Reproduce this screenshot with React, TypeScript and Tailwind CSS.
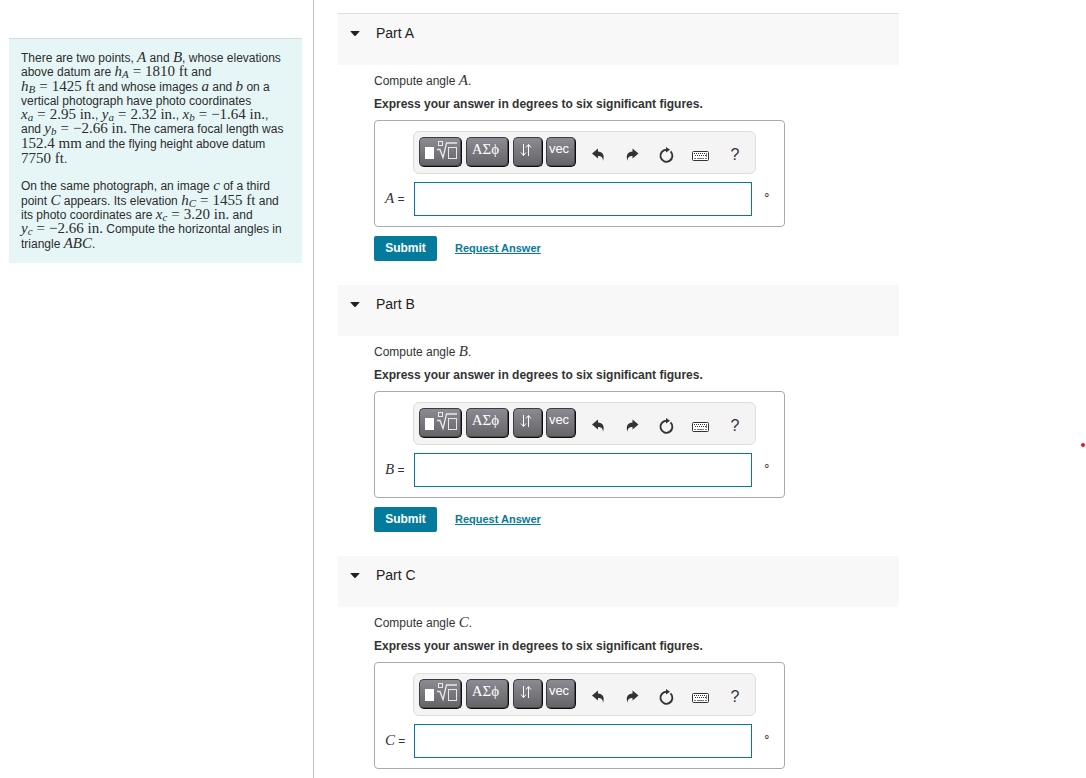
import React from "react";

const parts = [
    { letter: "A", first: true, actions: true },
    { letter: "B", first: false, actions: true },
    { letter: "C", first: false, actions: false },
];

export default function App() {
    return (
        <div className="relative flex min-h-screen bg-white font-['Liberation_Sans',Arial,sans-serif] text-xs text-[#333333]">
            <aside className="w-[314px] shrink-0 border-r border-[#bfc0c8] pt-[38px] pr-[11px] pl-[9px]">
                <Problem />
            </aside>
            <main className="min-w-0 flex-1 pt-[13px] pl-6">
                <div className="max-w-[561px]">
                    {parts.map((part) => (
                        <Part key={part.letter} {...part} />
                    ))}
                </div>
            </main>
            <span className="absolute top-[443px] right-px size-1 rounded-full bg-[#f01418]" />
        </div>
    );
}

function Problem() {
    return (
        <div className="border-t border-[#d5dcdd] bg-[#e6f6f7] px-3 pt-[11px] pb-3 leading-[14px] text-[#2c2c2c]">
            <p>
                There are two points, <Var>A</Var> and <Var>B</Var>, whose elevations
                above datum are <Equation name="h" sub="A" value="1810 ft" /> and{" "}
                <br />
                <Equation name="h" sub="B" value="1425 ft" /> and whose images{" "}
                <Var>a</Var> and <Var>b</Var> on a vertical photograph have photo
                coordinates <br />
                <Equation name="x" sub="a" value="2.95 in." />,{" "}
                <Equation name="y" sub="a" value="2.32 in." />,{" "}
                <Equation name="x" sub="b" value="−1.64 in." />, <br />
                and <Equation name="y" sub="b" value="−2.66 in." /> The camera focal
                length was <Num>152.4 mm</Num> and the flying height above datum{" "}
                <Num>7750 ft</Num>.
            </p>
            <p className="mt-3">
                On the same photograph, an image <Var>c</Var> of a third point{" "}
                <Var>C</Var> appears. Its elevation{" "}
                <Equation name="h" sub="C" value="1455 ft" /> and its photo coordinates
                are <Equation name="x" sub="c" value="3.20 in." /> and{" "}
                <Equation name="y" sub="c" value="−2.66 in." /> Compute the horizontal
                angles in triangle <Var>ABC</Var>.
            </p>
        </div>
    );
}

const Var = ({ children }: { children: React.ReactNode }) => (
    <i className="font-['Liberation_Serif',serif] text-[15px] leading-[14px]">
        {children}
    </i>
);

const Num = ({ children }: { children: React.ReactNode }) => (
    <span className="font-['Liberation_Serif',serif] text-[15px] leading-[14px] whitespace-nowrap">
        {children}
    </span>
);

const Equation = ({
    name,
    sub,
    value,
}: {
    name: string;
    sub: string;
    value: string;
}) => (
    <span className="font-['Liberation_Serif',serif] text-[15px] leading-[12px] whitespace-nowrap">
        <i>{name}</i>
        <sub className="bottom-[-2px] text-[11px] leading-none italic">{sub}</sub>
        <span className="mx-1">=</span>
        {value}
    </span>
);

function Part({
    letter,
    first,
    actions,
}: {
    letter: string;
    first: boolean;
    actions: boolean;
}) {
    return (
        <section className={actions ? "mb-6" : ""}>
            <header
                className={
                    first
                        ? "border-t border-[#dddddd] bg-[#f8f8f8]"
                        : "bg-[#f8f8f8]"
                }
            >
                <button
                    type="button"
                    className="flex h-[51px] w-full items-start gap-4 pt-[9px] pl-3 text-left text-sm text-[#222222]"
                >
                    <svg viewBox="0 0 10 5" className="mt-2 h-[5px] w-[10px]">
                        <path d="M1 0h8q1 0 .3.800L5.600 4.700q-.6.500-1.200 0L.7.800Q0 0 1 0z" fill="#222222" />
                    </svg>
                    Part {letter}
                </button>
            </header>

            <div className="pl-9">
                <p className="pt-2 leading-4">
                    Compute angle <Var>{letter}</Var>.
                </p>
                <p className="mt-[7px] leading-4 font-bold">
                    Express your answer in degrees to six significant figures.
                </p>

                <div className="mt-2 h-[107px] max-w-[411px] rounded-sm border border-[#aaaaaa] pt-[10px] pl-[38px]">
                    <Toolbar />
                    <div className="mt-2 -ml-7 flex items-center">
                        <label htmlFor={`answer-${letter}`} className="w-[29px] whitespace-nowrap">
                            <Var>{letter}</Var> =
                        </label>
                        <input
                            id={`answer-${letter}`}
                            type="text"
                            className="h-[34px] w-[338px] border border-[#047a9c] bg-white px-2 text-sm outline-none"
                        />
                        <span className="mb-2 ml-[11px] text-xs leading-4 text-[#444444]">
                            ∘
                        </span>
                    </div>
                </div>

                {actions && (
                    <div className="mt-[9px] flex items-center gap-[18px]">
                        <button
                            type="button"
                            className="h-[25px] w-[63px] rounded-xs bg-[#047a9c] pb-[2px] text-xs font-bold text-white"
                        >
                            Submit
                        </button>
                        <a
                            href="#"
                            className="text-[11px] font-bold text-[#047a9c] underline"
                        >
                            Request Answer
                        </a>
                    </div>
                )}
            </div>
        </section>
    );
}

const keyClass =
    "flex h-[30px] justify-center rounded-[5px] border border-[#0c0c0c] border-t-[#3c3c40] border-l-[#3c3c40] bg-linear-to-b from-[#8c8a93] to-[#646467] text-white shadow-[inset_-1px_-1px_0_#4a4a4e]";

function Toolbar() {
    return (
        <div className="flex h-[43px] w-[343px] items-center rounded-md border border-[#dddddd] bg-[#f4f4f4] pb-[2px] pl-[5px]">
            <button type="button" aria-label="Templates" className={`${keyClass} mr-1 w-[43px]`}>
                <TemplateIcon />
            </button>
            <button
                type="button"
                className={`${keyClass} mr-1 w-[43px] pt-[2px] pr-1 font-['Liberation_Serif',serif] text-[15px] leading-[18px]`}
            >
                ΑΣϕ
            </button>
            <button type="button" aria-label="Scripts" className={`${keyClass} mr-[3px] w-[30px] pt-1 pr-1`}>
                <ScriptsIcon />
            </button>
            <button type="button" className={`${keyClass} w-[30px] pt-[3px] pr-1 text-[13px] leading-4`}>
                vec
            </button>
            <div className="ml-[5px] flex items-center pt-[6px] text-[#333333]">
                <ToolButton label="Undo">
                    <path d="M2 6.500 8 1.500v3c4.500 0 7 3.500 5 9.500 0-3.500-1.500-5-5-5v2.500z" fill="currentColor" />
                </ToolButton>
                <ToolButton label="Redo">
                    <path d="M14.500 6.500 8.500 1.500v3c-4.500 0-7 3.500-5 9.500 0-3.500 1.500-5 5-5v2.500z" fill="currentColor" />
                </ToolButton>
                <ToolButton label="Reset">
                    <path d="M12.500 4.400A6 6 0 1 1 8.500 2.800" fill="none" stroke="currentColor" strokeWidth="1.900" />
                    <path d="M8 0v5.500l4-2.800z" fill="currentColor" />
                </ToolButton>
                <ToolButton label="Keyboard">
                    <rect x=".5" y="4.500" width="16" height="9" rx="1" fill="#ffffff" stroke="currentColor" />
                    <path d="M2 6.500h13M3 8.500h11" stroke="currentColor" strokeDasharray="1 1" />
                    <path d="M2 11.500h2M5 11.500h7M13 11.500h2" stroke="#777777" />
                    <path d="M14.500 6v4" stroke="#777777" />
                </ToolButton>
                <button type="button" aria-label="Help" className="h-[30px] w-[36px] text-base">
                    ?
                </button>
            </div>
        </div>
    );
}

const ToolButton = ({
    label,
    children,
}: {
    label: string;
    children: React.ReactNode;
}) => (
    <button
        type="button"
        aria-label={label}
        className="flex h-[30px] w-[34px] items-center justify-center"
    >
        <svg viewBox="0 0 16 16" className="size-4 overflow-visible">
            {children}
        </svg>
    </button>
);

// filled box next to an n-th root with empty slots
const TemplateIcon = () => (
    <svg viewBox="0 0 34 22" className="mt-px h-[22px] w-[34px]">
        <rect x="1" y="8" width="9" height="12" fill="#ffffff" />
        <g fill="none" stroke="#e8e8ea">
            <rect x="14.500" y="2.500" width="4" height="4" />
            <path d="M13 10.500h3l3 8 3.500-14.500H33" strokeWidth="1.300" />
            <rect x="24.500" y="8.500" width="8" height="11" />
        </g>
    </svg>
);

const ScriptsIcon = () => (
    <svg viewBox="0 0 14 16" className="h-4 w-[14px]">
        <path
            d="M4.500 2v11.500M2 10.500l2.500 3 2.500-3M9.500 14V2.500M7 5.500l2.500-3 2.500 3"
            fill="none"
            stroke="#ffffff"
        />
    </svg>
);
